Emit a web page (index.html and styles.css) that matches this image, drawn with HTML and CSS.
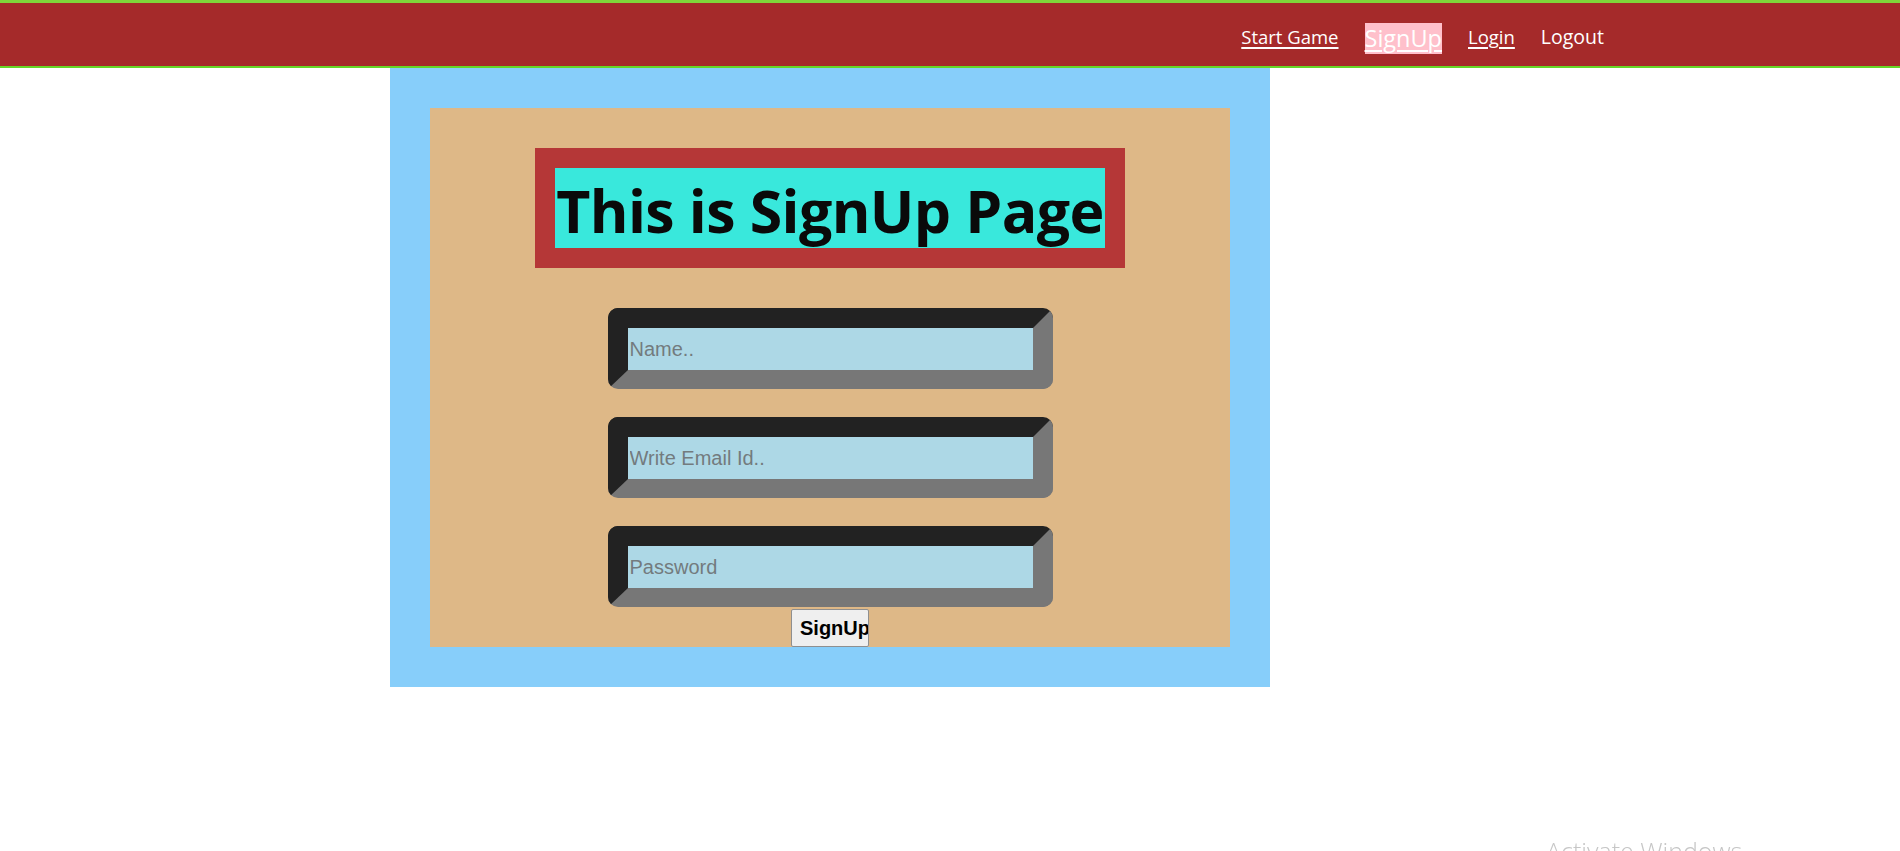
FILE: index.html
```html
<!DOCTYPE html>
<html lang="en">
<head>
<meta charset="utf-8">
<title>SignUp</title>
<link rel="stylesheet" href="styles.css">
</head>
<body>
<nav class="navbar">
  <ul class="nav-list">
    <li><a class="nav-link" href="#">Start Game</a></li>
    <li><a class="nav-link nav-active" href="#">SignUp</a></li>
    <li><a class="nav-link" href="#">Login</a></li>
    <li><span class="nav-plain">Logout</span></li>
  </ul>
</nav>
<main class="outer">
  <div class="card">
    <h1 class="title">This is SignUp Page</h1>
    <form class="form">
      <input class="field" type="text" placeholder="Name..">
      <input class="field" type="email" placeholder="Write Email Id..">
      <input class="field" type="password" placeholder="Password">
      <button class="submit" type="button">SignUp</button>
    </form>
  </div>
</main>
<div class="watermark">Activate Windows</div>
</body>
</html>
```

FILE: styles.css
```css
html, body {
  margin: 0;
  padding: 0;
  background: #ffffff;
}

body {
  font-family: "Open Sans", "Noto Sans", sans-serif;
  height: 851px;
  overflow: hidden;
}

.navbar {
  box-sizing: border-box;
  background: #a52a2a;
  border-top: 3px solid #7fd63a;
  border-bottom: 2px solid #66d626;
  height: 68px;
  padding-top: 5px;
  display: flex;
  align-items: center;
  justify-content: flex-end;
  padding-right: 296px;
}

.nav-list {
  list-style: none;
  margin: 0;
  padding: 0;
  display: flex;
  align-items: center;
  gap: 26px;
}

.nav-link,
.nav-plain {
  color: #ffffff;
  font-size: 18.5px;
  line-height: 26px;
}

.nav-plain {
  font-size: 19.5px;
}

.nav-link {
  text-decoration: underline;
  text-underline-offset: 3px;
  text-decoration-thickness: 1.5px;
}

.nav-active {
  background: #ffc0cb;
  font-size: 23.5px;
  line-height: 31px;
  display: inline-block;
  margin-top: 2px;
}

.outer {
  width: 800px;
  margin-left: 390px;
  padding: 40px;
  background: #87cefa;
}

.card {
  background: #deb887;
  padding-top: 40px;
  display: flex;
  flex-direction: column;
  align-items: center;
}

.title {
  margin: 0;
  background: #39e8dc;
  border: 20px solid #b53737;
  color: #0a0a0a;
  font-family: "Open Sans", "Noto Sans", sans-serif;
  font-weight: 700;
  font-size: 59px;
  line-height: 84px;
  height: 80px;
  width: 550px;
  text-align: center;
  white-space: nowrap;
  letter-spacing: -0.6px;
  overflow: hidden;
}

.form {
  margin-top: 40px;
  display: flex;
  flex-direction: column;
  align-items: center;
}

.field {
  box-sizing: border-box;
  width: 445px;
  height: 81px;
  margin: 0 0 28px 0;
  padding: 0 2px;
  border-style: solid;
  border-width: 20px 20px 19px 20px;
  border-color: #222222 #777777 #777777 #222222;
  border-radius: 10px;
  background: #add8e6;
  font-family: "Liberation Sans", Arial, sans-serif;
  font-size: 20px;
  color: #000;
  outline: none;
}

.field:last-of-type {
  margin-bottom: 2px;
}

.field::placeholder {
  color: #737b7e;
}

.submit {
  box-sizing: border-box;
  width: 78px;
  height: 38px;
  padding: 0 0 0 8px;
  text-align: left;
  overflow: hidden;
  white-space: nowrap;
  background: #efefef;
  border: 1px solid #8f8f8f;
  border-radius: 2px;
  font-family: "Liberation Sans", Arial, sans-serif;
  font-weight: 700;
  font-size: 20px;
  color: #000;
}

.watermark {
  position: fixed;
  left: 1546px;
  top: 834px;
  font-family: "Open Sans", "Noto Sans", sans-serif;
  font-weight: 300;
  font-size: 25px;
  color: #c6c6c6;
  white-space: nowrap;
}
```
